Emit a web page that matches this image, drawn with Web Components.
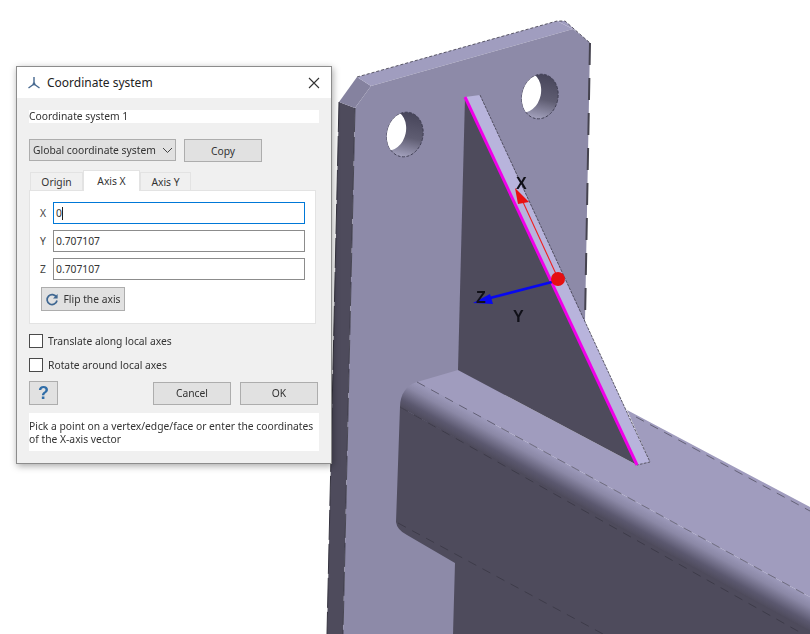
<!DOCTYPE html>
<html>
<head>
<meta charset="utf-8">
<title>Coordinate system</title>
<style>
    html, body { margin: 0; padding: 0; background: #fff; }
</style>
</head>
<body>
<cad-viewport>
    <cad-dialog heading="Coordinate system">
        <cad-name-field>Coordinate system 1</cad-name-field>
        <cad-toolbar></cad-toolbar>
        <cad-tabs></cad-tabs>
        <cad-check>Translate along local axes</cad-check>
        <cad-check>Rotate around local axes</cad-check>
        <cad-actions></cad-actions>
        <cad-hint>Pick a point on a vertex/edge/face or enter the coordinates of the X-axis vector</cad-hint>
    </cad-dialog>
</cad-viewport>

<script>
class CadViewport extends HTMLElement {
    constructor() {
        super();
        this.attachShadow({ mode: 'open' });
        this.shadowRoot.innerHTML = `
        <style>
            :host { display: block; position: relative; width: 810px; height: 634px; overflow: hidden; background: #fff; }
            svg { display: block; width: 810px; height: 634px; filter: blur(0.5px); }
            text { font-family: "Liberation Sans", Arial, sans-serif; font-weight: 700; font-size: 16px; fill: #101018; }
            ::slotted(cad-dialog) { position: absolute; left: 16px; top: 66px; }
        </style>
        <svg viewBox="0 0 810 634" xmlns="http://www.w3.org/2000/svg">
            <defs>
                <linearGradient id="band" gradientUnits="userSpaceOnUse" x1="417" y1="382" x2="402.6" y2="408.3">
                    <stop offset="0" stop-color="#9d9abb"/>
                    <stop offset="0.3" stop-color="#8b88a6"/>
                    <stop offset="0.75" stop-color="#5b586f"/>
                    <stop offset="1" stop-color="#4e4b5c"/>
                </linearGradient>
                <linearGradient id="bore" x1="0" y1="0" x2="0" y2="1">
                    <stop offset="0" stop-color="#47455a"/>
                    <stop offset="0.55" stop-color="#5f5d72"/>
                    <stop offset="1" stop-color="#a3a1bd"/>
                </linearGradient>
                <clipPath id="hole1"><ellipse cx="405" cy="134.5" rx="18" ry="22.5" transform="rotate(12 405 134.5)"/></clipPath>
                <clipPath id="hole2"><ellipse cx="540" cy="96.5" rx="18" ry="22.5" transform="rotate(12 540 96.5)"/></clipPath>
            </defs>

            <!-- plate -->
            <polygon points="339,102 355,108 343,634 327,634" fill="#4e4b5c"/>
            <polygon points="339,102 357,77 371,86 355,108" fill="#85829f"/>
            <polygon points="357,77 557,21 573,29 371,86" fill="#a09dbf"/>
            <polygon points="557,21 565,21 590,43 589,43 573,29" fill="#a09dbf"/>
            <polygon points="355,108 371,86 573,29 590,43 585,322 500,400 453,634 343,634" fill="#8d8aa8"/>
            <path d="M357 77L557 21L565 21L590 43" fill="none" stroke="#3c3a48" stroke-width="0.8" stroke-dasharray="3 2"/>
            <path d="M590 43L585 322" fill="none" stroke="#45434f" stroke-width="2" stroke-dasharray="22 13"/>
            <path d="M355 108L343 634" fill="none" stroke="#35333f" stroke-width="0.8" stroke-dasharray="24 5"/>
            <path d="M339 102L327 634" fill="none" stroke="#35333f" stroke-width="1" stroke-dasharray="30 4"/>

            <!-- holes -->
            <ellipse cx="405" cy="134.5" rx="18" ry="22.5" transform="rotate(12 405 134.5)" fill="url(#bore)" stroke="#38364a" stroke-width="0.8" stroke-dasharray="3 1.5"/>
            <g clip-path="url(#hole1)"><ellipse cx="389" cy="130" rx="17" ry="21" transform="rotate(12 389 130)" fill="#fff"/></g>
            <ellipse cx="540" cy="96.5" rx="18" ry="22.5" transform="rotate(12 540 96.5)" fill="url(#bore)" stroke="#38364a" stroke-width="0.8" stroke-dasharray="3 1.5"/>
            <g clip-path="url(#hole2)"><ellipse cx="524" cy="92" rx="17" ry="21" transform="rotate(12 524 92)" fill="#fff"/></g>

            <!-- beam top and gusset -->
            <polygon points="417,382 458,370 637,465 650,462 627,410 810,507 810,597" fill="#a09cbe"/>
            <polygon points="465,97 637,465 458,370" fill="#4e4b5c"/>
            <polygon points="465,97 480,95 650,462 637,465" fill="#b8b4dc"/>
            <path d="M480 95L650 462L637 465" fill="none" stroke="#3c3a48" stroke-width="0.8" stroke-dasharray="3 1"/>
            <line x1="465" y1="97" x2="637" y2="465" stroke="#f000e8" stroke-width="3"/>
            <path d="M636 417L810 511" fill="none" stroke="#3c3a48" stroke-width="0.6" stroke-dasharray="9 7"/>

            <!-- rounded edge and front of beam -->
            <path d="M417 382L810 597V634H806L400 407C400 395 406 385 417 382Z" fill="url(#band)"/>
            <path d="M400 407L810 631V634H453L455 563L407 535Q397 530 396 522Z" fill="#4e4b5c"/>
            <path d="M417 382L810 597" fill="none" stroke="#3c3a48" stroke-width="0.6" stroke-dasharray="9 7"/>
            <path d="M400 407L803 634" fill="none" stroke="#33313d" stroke-width="0.6" stroke-dasharray="9 7"/>
            <path d="M398 523L603 634" fill="none" stroke="#33313d" stroke-width="0.6" stroke-dasharray="9 7"/>

            <!-- axis gizmo -->
            <path d="M523 202L556 274" fill="none" stroke="#ee2020" stroke-width="1.1"/>
            <polygon points="515,188 518,204 529,202" fill="#e81010"/>
            <line x1="552" y1="282" x2="490" y2="298" stroke="#0808f0" stroke-width="2.6"/>
            <polygon points="473,303 490,294 493,304" fill="#0808f0"/>
            <circle cx="558" cy="279" r="7" fill="#e50f10"/>
            <text x="516" y="189">X</text>
            <text x="476" y="303">Z</text>
            <text x="513" y="322">Y</text>
        </svg>
        <slot></slot>`;
    }
}

class CadDialog extends HTMLElement {
    constructor() {
        super();
        this.attachShadow({ mode: 'open' });
        this.shadowRoot.innerHTML = `
        <style>
            :host {
                display: block;
                box-sizing: border-box;
                width: 316px;
                height: 398px;
                background: #f0f0f0;
                border: 1px solid #8c8c8c;
                box-shadow: 1px 2px 7px rgba(0,0,0,0.35);
                font-family: "Noto Sans", "Open Sans", sans-serif;
                font-size: 10.3px;
                color: #333;
                filter: blur(0.45px);
            }
            .title {
                height: 31px;
                background: #fff;
                display: flex;
                align-items: center;
                padding: 0 11px 0 9px;
                gap: 5px;
                font-size: 12px;
                color: #222;
            }
            .title span { flex: 1; }
            .body { padding: 12px 11px 0 12px; display: flex; flex-direction: column; }
        </style>
        <div class="title">
            <svg width="16" height="16" viewBox="0 0 16 16">
                <path d="M8 2V9M8 9L2.5 13M8 9L13.5 13" fill="none" stroke="#46688f" stroke-width="1.4"/>
                <circle cx="8" cy="9" r="1.4" fill="#46688f"/>
            </svg>
            <span></span>
            <svg width="12" height="12" viewBox="0 0 12 12">
                <path d="M1 1L11 11M11 1L1 11" fill="none" stroke="#333" stroke-width="1.1"/>
            </svg>
        </div>
        <div class="body"><slot></slot></div>`;
        this.shadowRoot.querySelector('.title span').textContent = this.getAttribute('heading');
    }
}

class CadNameField extends HTMLElement {
    constructor() {
        super();
        this.attachShadow({ mode: 'open' });
        this.shadowRoot.innerHTML = `
        <style>
            :host { display: block; height: 13px; width: 290px; line-height: 13px; background: #fff; margin-bottom: 16px; white-space: nowrap; }
        </style>
        <slot></slot>`;
    }
}

class CadButton extends HTMLElement {
    constructor() {
        super();
        this.attachShadow({ mode: 'open' });
        this.shadowRoot.innerHTML = `
        <style>
            :host {
                display: inline-flex;
                box-sizing: border-box;
                align-items: center;
                justify-content: center;
                gap: 4px;
                background: #e1e1e1;
                border: 1px solid #adadad;
                color: #333;
                white-space: nowrap;
            }
        </style>
        <slot></slot>`;
    }
}

class CadToolbar extends HTMLElement {
    constructor() {
        super();
        this.attachShadow({ mode: 'open' });
        this.shadowRoot.innerHTML = `
        <style>
            :host { display: flex; gap: 8px; height: 23px; margin-bottom: 8px; }
            .combo {
                box-sizing: border-box;
                width: 147px;
                height: 22px;
                background: #e1e1e1;
                border: 1px solid #adadad;
                display: flex;
                align-items: center;
                justify-content: space-between;
                padding: 0 2px 0 3px;
                white-space: nowrap;
            }
            cad-button { width: 78px; height: 23px; }
        </style>
        <div class="combo">
            <span>Global coordinate system</span>
            <svg width="11" height="7" viewBox="0 0 11 7"><path d="M1 1L5.5 5.5L10 1" fill="none" stroke="#444" stroke-width="1"/></svg>
        </div>
        <cad-button>Copy</cad-button>`;
    }
}

class CadAxisRow extends HTMLElement {
    constructor() {
        super();
        this.attachShadow({ mode: 'open' });
        const focused = this.hasAttribute('focused');
        this.shadowRoot.innerHTML = `
        <style>
            :host { display: flex; align-items: center; height: 22px; }
            label { width: 23px; padding-left: 10px; box-sizing: border-box; color: #444; }
            .input {
                box-sizing: border-box;
                width: 252px;
                height: 22px;
                line-height: 20px;
                padding-left: 2px;
                background: #fff;
                border: 1px solid ${focused ? '#0078d7' : '#8c8c8c'};
            }
            .caret { display: inline-block; width: 1px; height: 13px; background: #222; vertical-align: -3px; }
        </style>
        <label>${this.getAttribute('axis')}</label>
        <div class="input">${this.getAttribute('value')}${focused ? '<span class="caret"></span>' : ''}</div>`;
    }
}

class CadTabs extends HTMLElement {
    constructor() {
        super();
        this.attachShadow({ mode: 'open' });
        this.shadowRoot.innerHTML = `
        <style>
            :host { display: block; width: 287px; margin-bottom: 10px; }
            .strip { display: flex; align-items: flex-end; height: 20px; padding-left: 1px; position: relative; z-index: 1; }
            .tab {
                box-sizing: border-box;
                height: 18px;
                display: flex;
                align-items: center;
                justify-content: center;
                background: #f0f0f0;
                border: 1px solid #e3e3e3;
                border-bottom: 0;
            }
            .active { height: 21px; background: #fff; margin-bottom: -1px; }
            .panel {
                box-sizing: border-box;
                height: 134px;
                background: #fff;
                border: 1px solid #e3e3e3;
                padding: 11px 0 0 0;
                display: flex;
                flex-direction: column;
                gap: 6px;
            }
            cad-button { width: 84px; height: 24px; margin: 1px 0 0 11px; }
            cad-button svg { margin-top: 1px; }
        </style>
        <div class="strip">
            <div class="tab" style="width:53px">Origin</div>
            <div class="tab active" style="width:57px">Axis X</div>
            <div class="tab" style="width:51px">Axis Y</div>
        </div>
        <div class="panel">
            <cad-axis-row axis="X" value="0" focused></cad-axis-row>
            <cad-axis-row axis="Y" value="0.707107"></cad-axis-row>
            <cad-axis-row axis="Z" value="0.707107"></cad-axis-row>
            <cad-button>
                <svg width="14" height="14" viewBox="0 0 14 14">
                    <path d="M11.5 4.2A5 5 0 1 0 12 7.5" fill="none" stroke="#3f6791" stroke-width="1.7"/>
                    <path d="M12.6 1V5.6H8Z" fill="#3f6791"/>
                </svg>
                <span>Flip the axis</span>
            </cad-button>
        </div>`;
    }
}

class CadCheck extends HTMLElement {
    constructor() {
        super();
        this.attachShadow({ mode: 'open' });
        this.shadowRoot.innerHTML = `
        <style>
            :host { display: flex; align-items: center; gap: 5px; height: 14px; margin-bottom: 10px; white-space: nowrap; }
            i { display: block; box-sizing: border-box; width: 14px; height: 14px; background: #fff; border: 1px solid #4a4a4a; }
        </style>
        <i></i><slot></slot>`;
    }
}

class CadActions extends HTMLElement {
    constructor() {
        super();
        this.attachShadow({ mode: 'open' });
        this.shadowRoot.innerHTML = `
        <style>
            :host { display: flex; align-items: center; height: 24px; margin: -1px 0 8px 0; width: 290px; }
            .help { width: 29px; height: 24px; font: 700 18px "Liberation Sans", Arial, sans-serif; color: #2f6da8; margin-right: 95px; }
            .btn { width: 78px; height: 23px; }
            .ok { margin-left: 9px; }
        </style>
        <cad-button class="help">?</cad-button>
        <cad-button class="btn">Cancel</cad-button>
        <cad-button class="btn ok">OK</cad-button>`;
    }
}

class CadHint extends HTMLElement {
    constructor() {
        super();
        this.attachShadow({ mode: 'open' });
        this.shadowRoot.innerHTML = `
        <style>
            :host { display: block; box-sizing: border-box; width: 290px; height: 38px; background: #fff; line-height: 12.5px; padding-top: 7px; }
        </style>
        <slot></slot>`;
    }
}

customElements.define('cad-button', CadButton);
customElements.define('cad-axis-row', CadAxisRow);
customElements.define('cad-viewport', CadViewport);
customElements.define('cad-dialog', CadDialog);
customElements.define('cad-name-field', CadNameField);
customElements.define('cad-toolbar', CadToolbar);
customElements.define('cad-tabs', CadTabs);
customElements.define('cad-check', CadCheck);
customElements.define('cad-actions', CadActions);
customElements.define('cad-hint', CadHint);
</script>
</body>
</html>
